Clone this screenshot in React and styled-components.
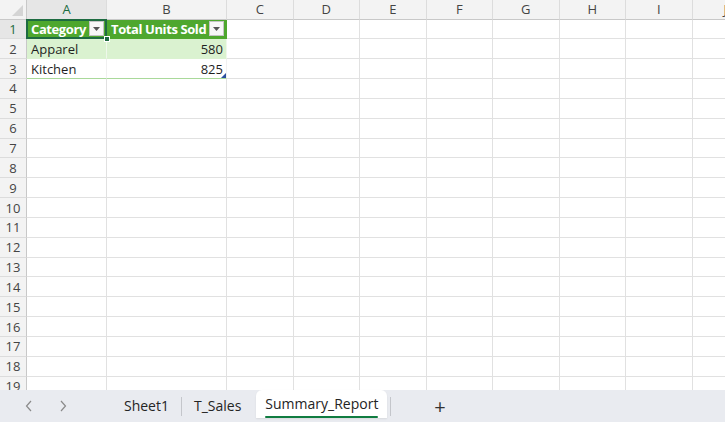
import React from "react";
import styled, { createGlobalStyle, css } from "styled-components";

const Global = createGlobalStyle`
  html, body { margin: 0; padding: 0; background: #fff; }
  body { font-family: "Open Sans", "Noto Sans", sans-serif; }
  * { box-sizing: border-box; }
`;

const COLS = ["A", "B", "C", "D", "E", "F", "G", "H", "I", "J"];
const WIDTHS = [80, 120, 66.5, 66.5, 66.5, 66.5, 66.5, 66.5, 66.5, 66.5];
const ROWS = 19;

const Page = styled.div`
  width: 725px;
  height: 422px;
  display: flex;
  flex-direction: column;
  overflow: hidden;
`;

const GridArea = styled.div`
  flex: 1;
  overflow: hidden;
  min-height: 0;
`;

const Grid = styled.div`
  display: grid;
  grid-template-columns: 27px ${WIDTHS.map((w) => w + "px").join(" ")};
  grid-template-rows: 19.5px repeat(${ROWS}, 19.85px);
  font-size: 13px;
  color: #1f1f1f;
`;

const Corner = styled.div`
  background: #f3f3f3;
  border-right: 1px solid #c8c8c8;
  border-bottom: 1px solid #c8c8c8;
  display: flex;
  align-items: flex-end;
  justify-content: flex-end;
  padding: 0 3px 3px 0;
`;

const ColHead = styled.div`
  background: ${(p) => (p.$active ? "#e6e6e6" : "#f3f3f3")};
  border-right: 1px solid #dcdcdc;
  border-bottom: 1px solid #c8c8c8;
  display: flex;
  align-items: center;
  justify-content: center;
  font-size: 13px;
  color: ${(p) => (p.$active ? "#1b6b3f" : "#444")};
`;

const RowHead = styled.div`
  background: ${(p) => (p.$active ? "#e6e6e6" : "#f3f3f3")};
  border-right: 1px solid #c8c8c8;
  border-bottom: 1px solid #dcdcdc;
  display: flex;
  align-items: center;
  justify-content: center;
  font-size: 13px;
  color: ${(p) => (p.$active ? "#1b6b3f" : "#444")};
`;

const Cell = styled.div`
  position: relative;
  border-right: 1px solid #e1e1e1;
  border-bottom: 1px solid #e1e1e1;
  display: flex;
  align-items: center;
  padding: 0 3px 0 4px;
  white-space: nowrap;
  justify-content: ${(p) => (p.$num ? "flex-end" : "flex-start")};
  ${(p) =>
    p.$kind === "head" &&
    css`
      background: #4ea72e;
      color: #fff;
      font-weight: 700;
      letter-spacing: -0.4px;
      border-right-color: #4ea72e;
      border-bottom-color: #4ea72e;
      justify-content: space-between;
      padding-right: 2px;
    `}
  ${(p) =>
    p.$kind === "band" &&
    css`
      background: #daf2d0;
      border-right-color: #eef8ea;
      border-bottom-color: #daf2d0;
    `}
  ${(p) =>
    p.$kind === "last" &&
    css`
      background: #fff;
      border-right-color: #f0f0f0;
      border-bottom: 1px solid #a9d99a;
    `}
`;

const FilterBtn = styled.span`
  width: 15px;
  height: 15px;
  background: #f7f7f7;
  border: 1px solid #c4c4c4;
  display: inline-flex;
  align-items: center;
  justify-content: center;
  flex: none;
`;

const ActiveBorder = styled.div`
  position: absolute;
  left: -1px;
  top: -1px;
  right: -1px;
  bottom: -1px;
  border: 2px solid #1e6b41;
  pointer-events: none;
`;

const FillHandle = styled.div`
  position: absolute;
  right: -4px;
  bottom: -4px;
  width: 6px;
  height: 6px;
  background: #1e6b41;
  border: 1px solid #fff;
  z-index: 2;
`;

const ResizeMark = styled.svg`
  position: absolute;
  right: 0;
  bottom: 0;
`;

const TabBar = styled.div`
  height: 32px;
  flex: none;
  background: #e9ebf0;
  display: flex;
  align-items: stretch;
  font-size: 14px;
  color: #242424;
`;

const NavBtn = styled.div`
  width: 34px;
  display: flex;
  align-items: center;
  justify-content: center;
  color: #9a9a9a;
`;

const NavGroup = styled.div`
  display: flex;
  padding-left: 12px;
  width: 112px;
`;

const Tab = styled.div`
  position: relative;
  display: flex;
  align-items: center;
  padding: 0 12px;
  ${(p) =>
    p.$active &&
    css`
      background: #fff;
      border-radius: 6px 6px 0 0;
      margin: 0 3px 4px;
      padding: 0 9px;
      box-shadow: 0 1px 2px rgba(0, 0, 0, 0.08);
    `}
`;

const TabLabel = styled.span`
  position: relative;
  padding-bottom: 1px;
  ${(p) =>
    p.$active &&
    css`
      &::after {
        content: "";
        position: absolute;
        left: 0;
        right: 0;
        bottom: -4px;
        height: 2px;
        background: #107c41;
        border-radius: 1px;
      }
    `}
`;

const Sep = styled.div`
  width: 1px;
  flex: none;
  background: #c4c6cb;
  margin: 7px 0 6px;
`;

const AddBtn = styled.div`
  width: 97px;
  display: flex;
  align-items: center;
  justify-content: center;
  font-size: 20px;
  color: #333;
`;

const Chevron = ({ dir }) => (
  <svg width="8" height="12" viewBox="0 0 8 12">
    <path
      d={dir === "left" ? "M6 1 L1.5 6 L6 11" : "M2 1 L6.5 6 L2 11"}
      fill="none"
      stroke="#8a8a8a"
      strokeWidth="1.2"
    />
  </svg>
);

const Tri = () => (
  <svg width="7" height="4" viewBox="0 0 7 4">
    <path d="M0 0 L7 0 L3.5 4 Z" fill="#555" />
  </svg>
);

const data = {
  1: [
    { t: "Category", kind: "head", filter: true, active: true },
    { t: "Total Units Sold", kind: "head", filter: true },
  ],
  2: [
    { t: "Apparel", kind: "band" },
    { t: "580", kind: "band", num: true },
  ],
  3: [
    { t: "Kitchen", kind: "last" },
    { t: "825", kind: "last", num: true, resize: true },
  ],
};

export default function App() {
  const cells = [];
  cells.push(
    <Corner key="corner">
      <svg width="11" height="11" viewBox="0 0 11 11">
        <path d="M11 0 L11 11 L0 11 Z" fill="#d4d4d4" />
      </svg>
    </Corner>
  );
  COLS.forEach((c, i) =>
    cells.push(
      <ColHead key={"h" + c} $active={i === 0}>
        {c}
      </ColHead>
    )
  );
  for (let r = 1; r <= ROWS; r++) {
    cells.push(
      <RowHead key={"r" + r} $active={r === 1}>
        {r}
      </RowHead>
    );
    COLS.forEach((c, i) => {
      const d = data[r] && data[r][i];
      cells.push(
        <Cell key={c + r} $kind={d?.kind} $num={d?.num}>
          {d && d.t}
          {d?.filter && (
            <FilterBtn>
              <Tri />
            </FilterBtn>
          )}
          {d?.active && (
            <>
              <ActiveBorder />
              <FillHandle />
            </>
          )}
          {d?.resize && (
            <ResizeMark width="5" height="5" viewBox="0 0 5 5">
              <path d="M5 0 L5 5 L0 5 Z" fill="#2b4f9e" />
            </ResizeMark>
          )}
        </Cell>
      );
    });
  }

  return (
    <Page>
      <Global />
      <GridArea>
        <Grid>{cells}</Grid>
      </GridArea>
      <TabBar>
        <NavGroup>
          <NavBtn>
            <Chevron dir="left" />
          </NavBtn>
          <NavBtn>
            <Chevron dir="right" />
          </NavBtn>
        </NavGroup>
        <Tab>
          <TabLabel>Sheet1</TabLabel>
        </Tab>
        <Sep />
        <Tab>
          <TabLabel>T_Sales</TabLabel>
        </Tab>
        <Tab $active>
          <TabLabel $active>Summary_Report</TabLabel>
        </Tab>
        <Sep />
        <AddBtn>+</AddBtn>
      </TabBar>
    </Page>
  );
}
